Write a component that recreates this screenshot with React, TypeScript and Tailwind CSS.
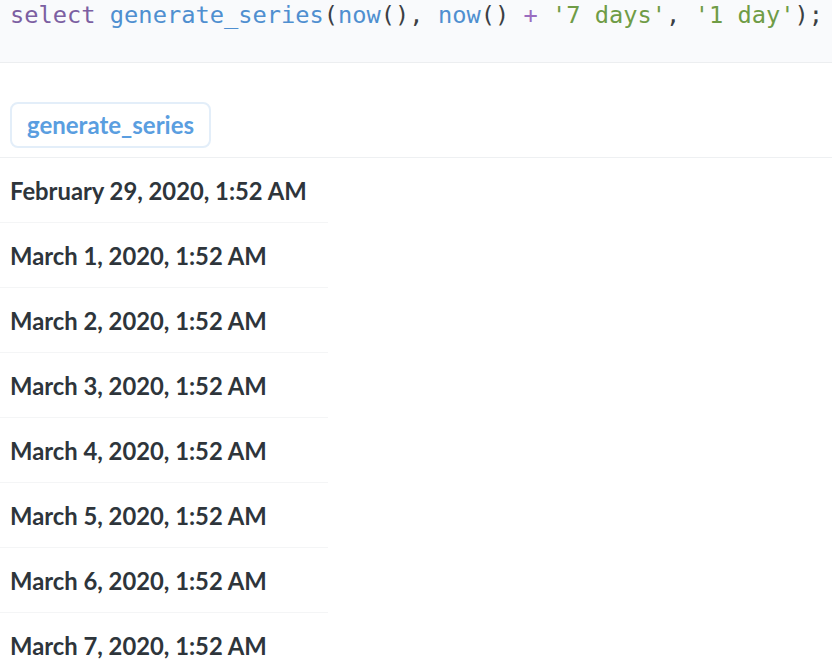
import React from 'react';

const rows = [
  'February 29, 2020, 1:52 AM',
  'March 1, 2020, 1:52 AM',
  'March 2, 2020, 1:52 AM',
  'March 3, 2020, 1:52 AM',
  'March 4, 2020, 1:52 AM',
  'March 5, 2020, 1:52 AM',
  'March 6, 2020, 1:52 AM',
  'March 7, 2020, 1:52 AM',
];

export default function App() {
  return (
    <div className="w-[832px] h-[670px] overflow-hidden bg-white">
      {/* query editor */}
      <div className="h-[63px] bg-[#f9fafc] border-b border-[#eceef0] pl-[10px] pt-[1px]">
        <pre className="font-['DejaVu_Sans_Mono',monospace] text-[23.7px] leading-[28px] text-[#3b3f44] whitespace-pre">
          <span className="text-[#7c5fa2]">select</span>{' '}
          <span className="text-[#4f8fd0]">generate_series</span>(
          <span className="text-[#4f8fd0]">now</span>(), <span className="text-[#4f8fd0]">now</span>(){' '}
          <span className="text-[#9a6cc0]">+</span>{' '}
          <span className="text-[#6f9c46]">'7 days'</span>, <span className="text-[#6f9c46]">'1 day'</span>);
        </pre>
      </div>

      {/* results table */}
      <div className="font-['Lato',sans-serif] pt-[39px]">
        <div className="border-b border-[#eef0f2] pb-[9px]">
          <div className="ml-[10px] inline-flex items-center h-[46px] px-[15px] rounded-[8px] border-2 border-[#e3eef9] text-[#5a9ee0] font-bold text-[24px]">
            generate_series
          </div>
        </div>
        <div className="w-[328px]">
          {rows.map((r, i) => (
            <div
              key={r}
              className={`h-[65px] flex items-center pl-[10px] pt-[3px] text-[23.8px] font-bold text-[#2e353b] ${
                i < rows.length - 1 ? 'border-b border-[#f4f5f6]' : ''
              }`}
            >
              {r}
            </div>
          ))}
        </div>
      </div>
    </div>
  );
}
